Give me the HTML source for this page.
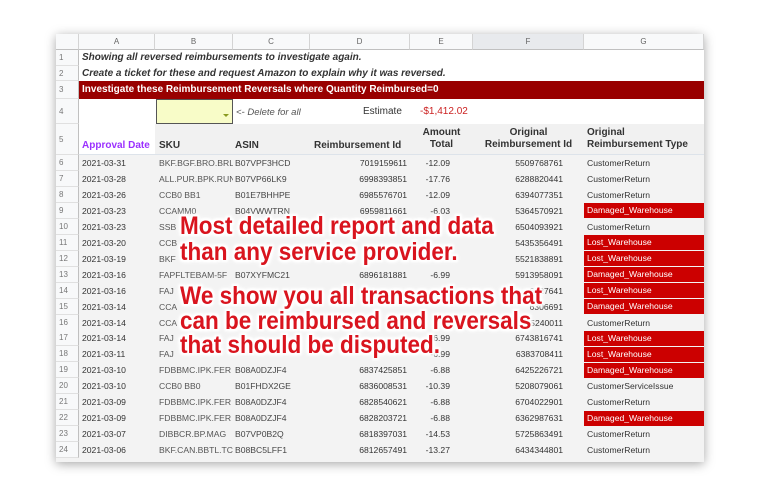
<!DOCTYPE html>
<html><head><meta charset="utf-8"><style>
*{margin:0;padding:0;box-sizing:border-box}
body{width:760px;height:494px;background:#fff;position:relative;overflow:hidden;font-family:"Liberation Sans",Arial,sans-serif}
.sheet{position:absolute;left:56px;top:34px;width:648px;height:428px;background:#f3f3f3;box-shadow:0 2px 10px rgba(0,0,0,.35);overflow:hidden}
.ab{position:absolute;font-size:8px;color:#333;white-space:nowrap}
.hc{position:absolute;top:0;height:16px;background:#f8f9fa;border-right:1px solid #d4d4d4;border-bottom:1px solid #c0c0c0;font-size:8px;color:#666;text-align:center;line-height:16px}
.rn{position:absolute;left:0;width:23px;background:#f8f9fa;border-right:1px solid #c0c0c0;border-bottom:1px solid #e0e0e0;font-size:8px;color:#777;padding-left:3px}
.c{position:absolute;font-size:8.6px;color:#333;white-space:nowrap;line-height:16px}
.red{position:absolute;left:528px;width:120px;height:15px;background:#cc0000;color:#fff;font-size:8.6px;padding-left:3px;line-height:15px}
.ov{position:absolute;left:180px;color:#d9141e;font-weight:bold;font-size:25px;line-height:25px;white-space:nowrap;transform-origin:0 0;transform:scaleX(.9);
text-shadow:0 0 3px #fff,0 0 3px #fff,2px 2px 2px #fff,-2px -2px 2px #fff,2px -2px 2px #fff,-2px 2px 2px #fff,0 0 6px #fff,0 0 6px #fff,0 0 8px #fff}
</style></head><body>
<div class="sheet">
<div class="hc" style="left:0;width:23px"></div>
<div class="hc" style="left:23px;width:76px">A</div>
<div class="hc" style="left:99px;width:78px">B</div>
<div class="hc" style="left:177px;width:77px">C</div>
<div class="hc" style="left:254px;width:100px">D</div>
<div class="hc" style="left:354px;width:63px">E</div>
<div class="hc" style="left:417px;width:111px;background:#e8eaed">F</div>
<div class="hc" style="left:528px;width:120px">G</div>
<div style="position:absolute;left:23px;top:16px;width:625px;height:104px;background:#fff"></div>
<div style="position:absolute;left:23px;top:47px;width:625px;height:18px;background:#990000"></div>
<div style="position:absolute;left:99px;top:90px;width:549px;height:30px;background:#f1f1f1"></div>
<div style="position:absolute;left:23px;top:120px;width:625px;height:1px;background:#dde3ea"></div>
<div style="position:absolute;left:100px;top:65px;width:77px;height:25px;background:#f8fcc8;border:1px solid #555"></div>
<div style="position:absolute;left:167px;top:80px;border:3px solid transparent;border-top:3px solid #8a9a20"></div>
<div class="rn" style="top:16px;height:16px;line-height:16px">1</div>
<div class="rn" style="top:32px;height:15px;line-height:15px">2</div>
<div class="rn" style="top:47px;height:18px;line-height:18px">3</div>
<div class="rn" style="top:65px;height:25px;line-height:25px">4</div>
<div class="rn" style="top:90px;height:31px;line-height:31px">5</div>
<div class="ab" style="left:26px;top:18px;font-style:italic;font-weight:bold;font-size:10px">Showing all reversed reimbursements to investigate again.</div>
<div class="ab" style="left:26px;top:34px;font-style:italic;font-weight:bold;font-size:10px">Create a ticket for these and request Amazon to explain why it was reversed.</div>
<div class="ab" style="left:26px;top:50px;font-weight:bold;font-size:10px;color:#fff">Investigate these Reimbursement Reversals where Quantity Reimbursed=0</div>
<div class="ab" style="left:180px;top:73px;font-style:italic;color:#555;font-size:9.5px">&lt;- Delete for all</div>
<div class="ab" style="left:307px;top:72px;font-size:10px">Estimate</div>
<div class="ab" style="left:364px;top:72px;font-size:10px;color:#cc2222">-$1,412.02</div>
<div class="ab" style="left:26px;top:106px;font-weight:bold;color:#9b30ff;font-size:10px">Approval Date</div>
<div class="ab" style="left:103px;top:106px;font-weight:bold;font-size:10px">SKU</div>
<div class="ab" style="left:179px;top:106px;font-weight:bold;font-size:10px">ASIN</div>
<div class="ab" style="left:258px;top:106px;font-weight:bold;font-size:10px">Reimbursement Id</div>
<div class="ab" style="left:354px;width:63px;top:93px;font-weight:bold;font-size:10px;text-align:center;line-height:12px">Amount<br>Total</div>
<div class="ab" style="left:417px;width:111px;top:93px;font-weight:bold;font-size:10px;text-align:center;line-height:12px">Original<br>Reimbursement Id</div>
<div class="ab" style="left:531px;top:93px;font-weight:bold;font-size:10px;line-height:12px">Original<br>Reimbursement Type</div>
<div id="rows"></div>
</div>
<script>
var d=[["2021-03-31","BKF.BGF.BRO.BRL","B07VPF3HCD","7019159611","-12.09","5509768761","CustomerReturn"],
["2021-03-28","ALL.PUR.BPK.RUN","B07VP66LK9","6998393851","-17.76","6288820441","CustomerReturn"],
["2021-03-26","CCB0 BB1","B01E7BHHPE","6985576701","-12.09","6394077351","CustomerReturn"],
["2021-03-23","CCAMM0","B04VWWTRN","6959811661","-6.03","5364570921","Damaged_Warehouse"],
["2021-03-23","SSB","","","","6504093921","CustomerReturn"],
["2021-03-20","CCB","","","","5435356491","Lost_Warehouse"],
["2021-03-19","BKF","","","","5521838891","Lost_Warehouse"],
["2021-03-16","FAPFLTEBAM-5F","B07XYFMC21","6896181881","-6.99","5913958091","Damaged_Warehouse"],
["2021-03-16","FAJ","","","","6327641","Lost_Warehouse"],
["2021-03-14","CCA","","","","6306691","Damaged_Warehouse"],
["2021-03-14","CCA","","","","5240011","CustomerReturn"],
["2021-03-14","FAJ","","","-6.99","6743816741","Lost_Warehouse"],
["2021-03-11","FAJ","","","-6.99","6383708411","Lost_Warehouse"],
["2021-03-10","FDBBMC.IPK.FER","B08A0DZJF4","6837425851","-6.88","6425226721","Damaged_Warehouse"],
["2021-03-10","CCB0 BB0","B01FHDX2GE","6836008531","-10.39","5208079061","CustomerServiceIssue"],
["2021-03-09","FDBBMC.IPK.FER","B08A0DZJF4","6828540621","-6.88","6704022901","CustomerReturn"],
["2021-03-09","FDBBMC.IPK.FER","B08A0DZJF4","6828203721","-6.88","6362987631","Damaged_Warehouse"],
["2021-03-07","DIBBCR.BP.MAG","B07VP0B2Q","6818397031","-14.53","5725863491","CustomerReturn"],
["2021-03-06","BKF.CAN.BBTL.TC","B08BC5LFF1","6812657491","-13.27","6434344801","CustomerReturn"]];
var h="";d.forEach(function(r,i){var t=121+i*15.95,n=i+6;
h+='<div class="rn" style="top:'+t+'px;height:16px;line-height:16px">'+n+'</div>';
h+='<div class="c" style="left:26px;top:'+t+'px">'+r[0]+'</div>';
h+='<div class="c" style="left:103px;top:'+t+'px;width:74px;overflow:hidden;color:#555">'+r[1]+'</div>';
h+='<div class="c" style="left:179px;top:'+t+'px;color:#444">'+r[2]+'</div>';
h+='<div class="c" style="left:258px;top:'+t+'px;width:93px;text-align:right">'+r[3]+'</div>';
h+='<div class="c" style="left:354px;top:'+t+'px;width:40px;text-align:right">'+r[4]+'</div>';
h+='<div class="c" style="left:417px;top:'+t+'px;width:90px;text-align:right">'+r[5]+'</div>';
if(r[6]!="CustomerReturn"&&r[6]!="CustomerServiceIssue")h+='<div class="red" style="top:'+(t+0.5)+'px">'+r[6]+'</div>';
else h+='<div class="c" style="left:531px;top:'+t+'px">'+r[6]+'</div>';});
document.getElementById("rows").innerHTML=h;
</script>
<div class="ov" style="top:214px">Most detailed report and data</div>
<div class="ov" style="top:240px">than any service provider.</div>
<div class="ov" style="top:284px">We show you all transactions that</div>
<div class="ov" style="top:309px">can be reimbursed and reversals</div>
<div class="ov" style="top:333px">that should be disputed.</div>
</body></html>
